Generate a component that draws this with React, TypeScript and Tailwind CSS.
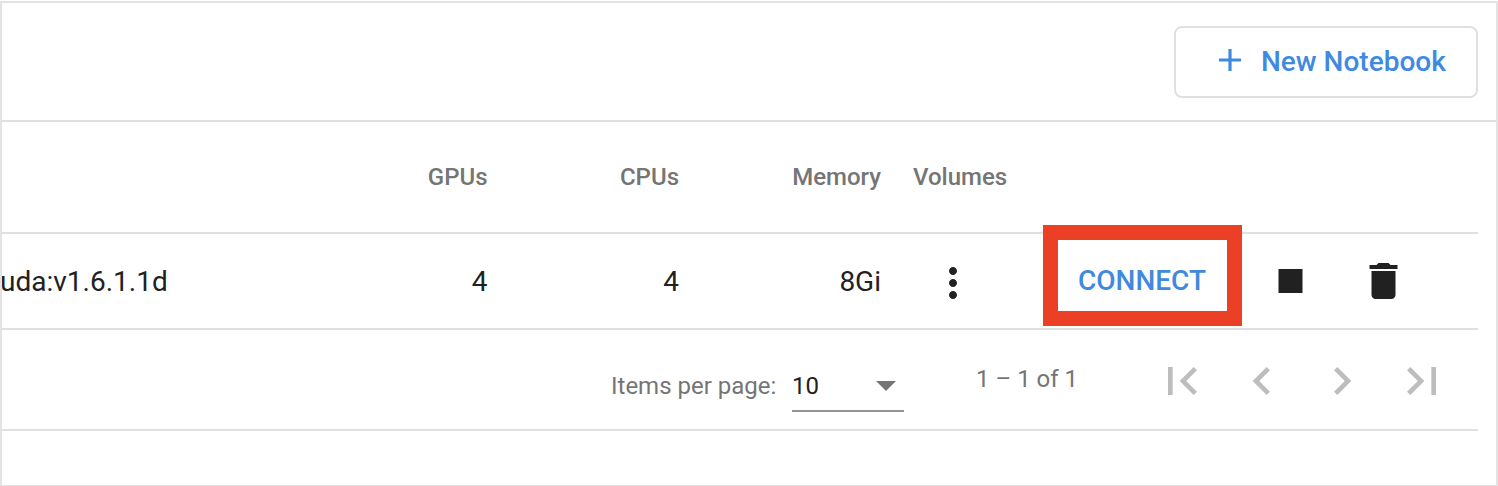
type IconProps = {
  d: string;
  className?: string;
};

function Icon({ d, className = "size-12" }: IconProps) {
  return (
    <svg viewBox="0 0 24 24" fill="currentColor" className={`block shrink-0 ${className}`}>
      <path d={d} />
    </svg>
  );
}

const icons = {
  add: "M19 13h-6v6h-2v-6H5v-2h6V5h2v6h6v2z",
  more: "M12 8c1.1 0 2-.9 2-2s-.9-2-2-2-2 .9-2 2 .9 2 2 2zm0 2c-1.1 0-2 .9-2 2s.9 2 2 2 2-.9 2-2-.9-2-2-2zm0 6c-1.1 0-2 .9-2 2s.9 2 2 2 2-.9 2-2-.9-2-2-2z",
  stop: "M6 6h12v12H6z",
  trash: "M6 19c0 1.1.9 2 2 2h8c1.1 0 2-.9 2-2V7H6v12zM19 4h-3.5l-1-1h-5l-1 1H5v2h14V4z",
};

const pageButtons = [
  { label: "First page", d: "M18.41 16.59L13.82 12l4.59-4.59L17 6l-6 6 6 6zM6 6h2v12H6z" },
  { label: "Previous page", d: "M15.41 7.41L14 6l-6 6 6 6 1.41-1.41L10.83 12z" },
  { label: "Next page", d: "M10 6L8.59 7.41 13.17 12l-4.58 4.59L10 18l6-6z" },
  { label: "Last page", d: "M5.59 7.41L10.18 12l-4.59 4.59L7 18l6-6-6-6zM16 6h2v12h-2z" },
];

const columns = "grid grid-cols-[293.5px_192px_191.5px_202px_130px_1fr] items-center";

export default function App() {
  return (
    <div className="h-[486px] bg-white pt-px font-['Roboto',sans-serif] text-[#212121]">
      <div className="flex h-[485px] flex-col overflow-hidden border-x-2 border-t-2 border-b border-[#e3e3e3]">

        {/* toolbar */}
        <header className="flex h-[119px] shrink-0 items-start justify-end border-b-2 border-[#e0e0e0] pt-[23px] pr-[18px]">
          <button className="flex h-[72px] w-[304px] items-center rounded-lg border-2 border-[#e0e0e0] pb-1 pl-[35px] text-[28px] font-medium text-[#4089e0]">
            <Icon d={icons.add} className="size-[38px]" />
            <span className="ml-3 pt-1 whitespace-nowrap">New Notebook</span>
          </button>
        </header>

        <main className="mr-[18px]">
          {/* column titles */}
          <div className={`${columns} h-28 border-b-2 border-[#e0e0e0] text-right text-2xl font-medium text-[#757575]`}>
            <span className="col-start-2">GPUs</span>
            <span>CPUs</span>
            <span>Memory</span>
            <span className="pl-8 text-left">Volumes</span>
          </div>

          {/* notebook row */}
          <div className={`${columns} h-24 border-b-2 border-[#e0e0e0] text-right text-[28px]`}>
            <span className="-ml-0.5 pt-0.5 text-left">uda:v1.6.1.1d</span>
            <span className="pt-0.5">4</span>
            <span className="pt-0.5">4</span>
            <span className="pt-0.5">8Gi</span>
            <button className="ml-12 pt-1">
              <Icon d={icons.more} />
            </button>
            <div className="flex items-center">
              <button className="relative ml-[67px] w-[130px] text-left font-medium text-[#4089e0]">
                CONNECT
                <span className="pointer-events-none absolute -top-[35px] -left-[35px] h-[101px] w-[199px] border-[15px] border-[#eb4026]" />
              </button>
              <button className="ml-[59px] -translate-x-[0.5px]">
                <Icon d={icons.stop} />
              </button>
              <button className="ml-[45px] -translate-x-[0.5px]">
                <Icon d={icons.trash} />
              </button>
            </div>
          </div>

          {/* paginator */}
          <div className="flex h-[101px] items-center border-b-2 border-[#e0e0e0] text-2xl text-[#757575]">
            <span className="ml-[609px] w-[181px] pt-3 whitespace-nowrap">Items per page:</span>
            <div className="mt-[15px] flex h-[49px] w-28 items-start justify-between border-b-2 border-[#949494] pr-2 text-[#212121]">
              <span className="pt-[7px]">10</span>
              <svg viewBox="0 0 20 10" className="mt-[18px] h-2.5 w-5 fill-[#757575]">
                <path d="M0 0h20L10 10z" />
              </svg>
            </div>
            <span className="ml-[72px] w-[166px] pb-0.5 whitespace-nowrap">1 – 1 of 1</span>
            {pageButtons.map((button) => (
              <button
                key={button.label}
                aria-label={button.label}
                className="flex w-20 shrink-0 justify-center pt-[3px] text-[#bdbdbd]"
              >
                <Icon d={button.d} className="size-14" />
              </button>
            ))}
          </div>
        </main>
      </div>
    </div>
  );
}
